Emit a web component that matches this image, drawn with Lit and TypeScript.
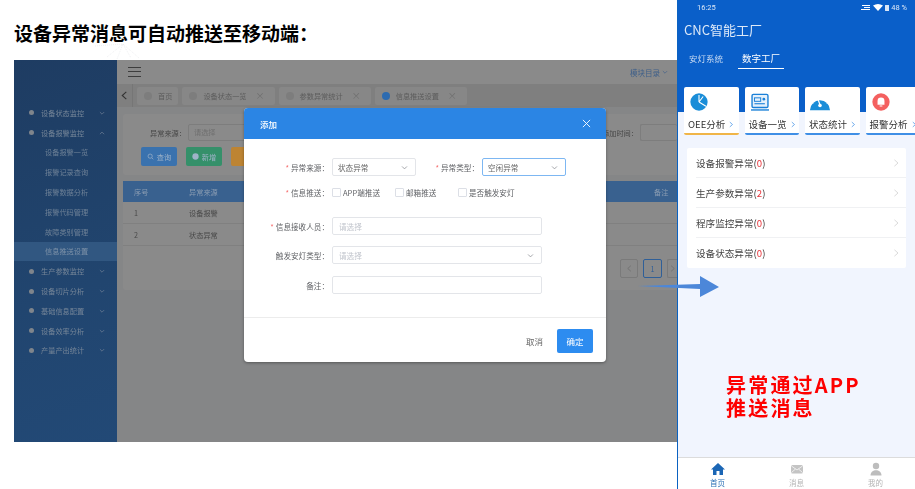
import { LitElement, html, css, svg } from "lit";
import { customElement } from "lit/decorators.js";

const chev = (cls: string, up = false) => html`<svg class=${cls} viewBox="0 0 10 10"><path d=${up ? "M1.5 7 5 3.5 8.5 7" : "M1.5 3.5 5 7 8.5 3.5"} fill="none" stroke="currentColor" stroke-width="1.1"/></svg>`;
const right = (cls: string) => html`<svg class=${cls} viewBox="0 0 10 10"><path d="M3 1 7.5 5 3 9" fill="none" stroke="currentColor" stroke-width="1.2"/></svg>`;

const cards = [
  { label: "OEE分析", color: "#f0b548", icon: svg`<circle cx="13" cy="13" r="12.5" fill="#1a8dd8"/><path d="M13 13V3M13 13l6-8M13 13l10 6" stroke="#fff" stroke-width="1.6" fill="none"/>` },
  { label: "设备一览", color: "#3f8fe6", icon: svg`<rect x="1.5" y="2" width="23" height="19" rx="2" fill="#e6f1fb" stroke="#1a80d8" stroke-width="2"/><rect x="5" y="7" width="9" height="5" fill="none" stroke="#1a80d8" stroke-width="1.4"/><circle cx="18.5" cy="9" r="2" fill="#1a80d8"/><path d="M5 15.5h15" stroke="#1a80d8" stroke-width="1.6"/><path d="M0 24.5h26" stroke="#1a80d8" stroke-width="2"/>` },
  { label: "状态统计", color: "#3f8fe6", icon: svg`<path d="M-1.5 25A14.5 14.5 0 1 1 27.500 25Z" fill="#1a8dd8"/><path d="M13 17 9.500 7.500" stroke="#fff" stroke-width="1.800"/><circle cx="13" cy="18" r="2.600" fill="#fff"/><path d="M1 15h2.500M22.500 15H25M5 6l1.500 1.500M21 6l-1.500 1.500M13 2v2.500" stroke="#fff" stroke-width="1.200"/>` },
  { label: "报警分析", color: "#3f8fe6", icon: svg`<circle cx="13" cy="13" r="12.500" fill="#f4605f"/><path d="M8 17v-5.500a5 5 0 0 1 10 0V17Z" fill="#fff"/><rect x="11" y="18" width="4" height="1.500" fill="#fff"/>` },
];
const listRows = [["设备报警异常", "0"], ["生产参数异常", "2"], ["程序监控异常", "0"], ["设备状态异常", "0"]];

@customElement("app-root")
export class AppRoot extends LitElement {
  static styles = css`
    :host { display: block; width: 915px; height: 489px; overflow: hidden; background: #fff; font-family: "Noto Sans CJK SC", "Liberation Sans", sans-serif; position: relative; }
    svg { display: block; flex: none; }
    .page { display: grid; grid-template-columns: 677px 238px; height: 489px; }
    .left { padding: 23px 0 0 14px; display: flex; flex-direction: column; }
    h1 { margin: 0; height: 37px; font-size: 19px; line-height: 20px; font-weight: 700; color: #000; white-space: nowrap; }
    .shot { position: relative; width: 663px; height: 382px; display: grid; grid-template-columns: 103px 1fr; background: #858687; overflow: hidden; filter: blur(0.35px); }

    .side { background: linear-gradient(160deg, #1e3c62 0%, #21456f 60%, #224976 100%); padding-top: 43px; font-size: 7.200px; color: #768698; }
    .m { height: 19.800px; display: flex; align-items: center; padding-left: 15px; gap: 7px; }
    .m i { width: 5px; height: 5px; border-radius: 50%; background: #7f858c; }
    .m span { flex: 1; }
    .m .c { width: 6px; height: 6px; margin-right: 12px; color: #77879b; }
    .s { height: 19.800px; display: flex; align-items: center; padding-left: 31px; color: #6d8096; }
    .s.on { background: #315781; color: #7d91a8; }

    .main { display: flex; flex-direction: column; min-width: 0; color: #5b5b5b; font-size: 7.200px; }
    .top { height: 24px; background: #8a8a8a; display: flex; align-items: center; justify-content: space-between; padding: 0 9px 0 11px; }
    .ham { width: 13px; height: 8px; border-top: 1px solid #3d3d3d; border-bottom: 1px solid #3d3d3d; position: relative; }
    .ham::after { content: ""; position: absolute; left: 0; right: 0; top: 3px; height: 1px; background: #3d3d3d; }
    .mod { display: flex; align-items: center; gap: 2px; color: #3e5f89; font-size: 7.500px; }
    .mod svg { width: 6px; height: 6px; }
    .tabs { height: 23px; background: #7f7f7f; display: flex; align-items: center; gap: 4px; padding-left: 3px; }
    .tabs .back { width: 13px; color: #333; height: 100%; display: flex; align-items: center; border-right: 1px solid #767676; box-sizing: border-box; margin-right: 0; }
    .tabs .back svg { width: 9px; height: 9px; transform: scaleX(-1); }
    .tab { height: 18px; background: #878787; border-radius: 2px; display: flex; align-items: center; padding: 0 10px 0 7px; gap: 6px; color: #5c5c5c; }
    .tab.short { padding-right: 6px; }
    .tab i { width: 8px; height: 8px; border-radius: 50%; background: #7d7d7d; }
    .tab i.on { background: #2d6bb0; }
    .tab b { font-weight: 400; color: #6e6e6e; margin-left: 3px; font-size: 9px; line-height: 1; }
    .content { padding: 7px 0 0 6px; display: flex; flex-direction: column; gap: 6px; }
    .filter { height: 61px; background: #8a8a8a; border-radius: 2px; padding: 10px 0 0 18px; box-sizing: border-box; }
    .f1 { display: flex; align-items: center; height: 17px; justify-content: space-between; color: #474747; padding-left: 9px; }
    .f1 div { display: flex; align-items: center; gap: 2px; }
    .f1 u { display: block; text-decoration: none; width: 100px; height: 17px; border: 1px solid #7d7d7d; box-sizing: border-box; border-radius: 2px; padding: 2px 5px; color: #6f6f6f; }
    .f1 u.r { width: 37px; border-right: 0; }
    .btns { display: flex; gap: 9px; margin-top: 6px; }
    .btn { height: 19px; width: 36px; border-radius: 2px; display: flex; align-items: center; justify-content: center; gap: 3px; color: #9fb3c8; }
    .btn svg { width: 7px; height: 7px; }
    .blue { background: #3a72ae; }
    .green { background: #35906a; }
    .orange { background: #bd8433; }
    .tbl { height: 109px; background: #8a8a8a; border-radius: 2px; position: relative; }
    .tr { height: 22px; display: grid; grid-template-columns: 55px 1fr 23px; align-items: center; padding-left: 11px; border-bottom: 1px solid #808080; box-sizing: border-box; color: #484848; }
    .tr.h { height: 21px; background: #39618f; color: #8a9cb2; border-bottom: 0; }
    .pager { position: absolute; right: 0; bottom: 12px; display: flex; align-items: center; gap: 5px; color: #4b4b4b; }
    .pager span { margin-right: 9px; }
    .pager em { width: 18px; height: 19px; box-sizing: border-box; border: 1px solid #7a7a7a; border-radius: 2px; display: flex; align-items: center; justify-content: center; font-style: normal; color: #707070; }
    .pager em svg { width: 7px; height: 7px; }
    .pager em.on { border-color: #2f5f98; color: #2f5f98; width: 19px; }
    .pager em.cut { width: 10px; border-right: 0; border-radius: 2px 0 0 2px; }
    .flip { transform: scaleX(-1); }

    .modal { position: absolute; left: 230px; top: 48px; width: 362px; height: 254px; background: #fff; border-radius: 4px; box-shadow: 0 1px 3px rgba(0,0,0,.35); display: flex; flex-direction: column; overflow: hidden; }
    .mh { height: 31px; background: #2b85e4; color: #fff; display: flex; align-items: center; justify-content: space-between; padding: 0 15px 0 16px; font-size: 8.500px; font-weight: 500; flex: none; }
    .mh svg { width: 9px; height: 9px; }
    .mb { flex: 1; padding-top: 19px; color: #606266; font-size: 7.600px; }
    .row { display: flex; align-items: center; height: 18px; }
    .mt7 { margin-top: 7px; }
    .mt16 { margin-top: 16px; }
    .mt11 { margin-top: 11px; }
    .mt12 { margin-top: 12px; }
    .lab { width: 88px; text-align: right; padding-right: 3px; box-sizing: border-box; white-space: nowrap; }
    .lab.two { width: 66px; }
    .star { color: #f56c6c; margin-right: 2px; }
    .inp { height: 18px; box-sizing: border-box; border: 1px solid #e3e5e9; border-radius: 2px; display: flex; align-items: center; justify-content: space-between; padding: 0 7px 0 5px; color: #666; background: #fff; }
    .inp.w1 { width: 84px; }
    .inp.w2 { width: 210px; padding-left: 6px; }
    .inp.focus { border-color: #7db7f2; }
    .inp .ph { color: #c0c4cc; }
    .inp svg { width: 7px; height: 7px; color: #8a8d92; }
    .checks { display: flex; }
    .ck { display: flex; align-items: center; gap: 2px; white-space: nowrap; width: 63px; }
    .ck i { width: 9px; height: 9px; box-sizing: border-box; border: 1px solid #dcdfe6; border-radius: 1px; }
    .mf { height: 45px; box-sizing: border-box; border-top: 1px solid #ececec; flex: none; display: flex; align-items: center; justify-content: flex-end; padding: 1px 13px 0 0; gap: 14px; font-size: 8.500px; color: #666; }
    .ok { width: 36px; height: 24px; border-radius: 2px; background: #2d8cf0; color: #fff; display: flex; align-items: center; justify-content: center; }

    .deco { position: absolute; left: 93px; top: 43px; width: 52px; height: 17px; }
    .arrow { position: absolute; left: 638px; top: 276px; width: 82px; height: 22px; }

    .phone { border-left: 1px solid #0a62c2; background: #f1f5fe; display: flex; flex-direction: column; box-sizing: border-box; height: 489px; filter: blur(0.25px); }
    .hero { background: #0a5fc9; height: 112px; flex: none; color: #fff; padding-left: 6px; box-sizing: border-box; }
    .status { height: 15px; display: flex; align-items: center; justify-content: space-between; font-size: 7.500px; color: #dbe7f7; padding: 0 8px 0 13px; font-family: "Roboto", sans-serif; }
    .status div { display: flex; align-items: center; gap: 2px; }
    .status svg { height: 7px; width: auto; }
    .ttl { font-size: 13px; line-height: 20px; margin-top: 5px; color: #dde9f8; font-weight: 400; }
    .ptabs { display: flex; margin-top: 12px; padding-left: 5px; font-size: 8.500px; gap: 19px; }
    .ptabs span { color: #c4d8f2; height: 17px; line-height: 12px; }
    .ptabs span.on { color: #fff; font-size: 9.500px; border-bottom: 1px solid #fff; padding: 0 4px; height: 16px; margin-left: -4px; }
    .cards { display: flex; gap: 6px; padding-left: 6px; margin-top: -25px; flex: none; height: 48px; overflow: hidden; }
    .card { width: 54.500px; flex: none; height: 48px; box-sizing: border-box; background: #fff; border-radius: 2px; border-bottom: 2px solid; display: flex; flex-direction: column; padding: 6px 0 0 4px; }
    .card svg.ic { width: 18px; height: 18px; margin-left: 2px; overflow: visible; }
    .card p { margin: auto 0 2px; display: flex; align-items: center; gap: 3px; font-size: 9.500px; line-height: 14px; color: #333; white-space: nowrap; }
    .card p svg { width: 6px; height: 7px; color: #3f8fe6; }
    .list { margin: 13px 9px 0 9px; background: #fff; border-radius: 2px; flex: none; padding-left: 9px; }
    .li { height: 30px; box-sizing: border-box; display: flex; align-items: center; justify-content: space-between; padding-right: 6px; border-bottom: 1px solid #f0f1f3; font-size: 9.600px; color: #444; }
    .li:last-child { border-bottom: 0; }
    .li em { font-style: normal; color: #e8333a; }
    .li svg { width: 8px; height: 10px; color: #d8d8d8; }
    .msg { margin: 105px 0 0 48px; font-size: 20px; line-height: 23px; font-weight: 700; letter-spacing: 2.200px; color: #fe0000; flex: none; white-space: nowrap; }
    .nav { margin-top: auto; height: 32px; box-sizing: border-box; background: #fff; border-top: 1px solid #dcdcdc; display: grid; grid-template-columns: repeat(3, 1fr); flex: none; }
    .nav div { display: flex; flex-direction: column; align-items: center; font-size: 7.500px; color: #b4b4b4; padding-top: 4px; gap: 2px; line-height: 10px; }
    .nav div.on { color: #2a6fb5; }
    .nav svg { width: 14px; height: 14px; }
  `;

  menu(t: string, up = false) {
    return html`<div class="m"><i></i><span>${t}</span>${chev("c", up)}</div>`;
  }
  tab(t: string, on = false, close = true) {
    return html`<div class="tab ${close ? "" : "short"}"><i class=${on ? "on" : ""}></i><span>${t}</span>${close ? html`<b>×</b>` : ""}</div>`;
  }

  render() {
    return html`<div class="page">
      <section class="left">
        <h1>设备异常消息可自动推送至移动端：</h1>
        <div class="shot">
          <aside class="side">
            ${this.menu("设备状态监控")}
            ${this.menu("设备报警监控", true)}
            ${["设备报警一览", "报警记录查询", "报警数据分析", "报警代码管理", "故障类别管理"].map((s) => html`<div class="s">${s}</div>`)}
            <div class="s on">信息推送设置</div>
            ${["生产参数监控", "设备切片分析", "基础信息配置", "设备效率分析", "产量产出统计"].map((s) => this.menu(s))}
          </aside>
          <div class="main">
            <div class="top"><div class="ham"></div><div class="mod">模块目录${chev("")}</div></div>
            <div class="tabs">
              <div class="back">${right("")}</div>
              ${this.tab("首页", false, false)}${this.tab("设备状态一览")}${this.tab("参数异常统计")}${this.tab("信息推送设置", true)}
            </div>
            <div class="content">
              <div class="filter">
                <div class="f1"><div>异常来源：<u>请选择</u></div><div>添加时间：<u class="r"></u></div></div>
                <div class="btns">
                  <div class="btn blue"><svg viewBox="0 0 10 10"><circle cx="4.500" cy="4.500" r="3" fill="none" stroke="currentColor"/><path d="m7 7 2 2" stroke="currentColor"/></svg>查询</div>
                  <div class="btn green"><svg viewBox="0 0 10 10"><circle cx="5" cy="5" r="4.500" fill="currentColor"/></svg>新增</div>
                  <div class="btn orange"><svg viewBox="0 0 10 10"><path d="m2 8 5-5" stroke="currentColor" stroke-width="1.500"/></svg></div>
                </div>
              </div>
              <div class="tbl">
                <div class="tr h"><span>序号</span><span>异常来源</span><span>备注</span></div>
                <div class="tr"><span>1</span><span>设备报警</span><span></span></div>
                <div class="tr"><span>2</span><span>状态异常</span><span></span></div>
                <div class="pager"><span>条</span><em>${right("flip")}</em><em class="on">1</em><em class="cut">${right("")}</em></div>
              </div>
            </div>
          </div>
          <div class="modal">
            <div class="mh"><span>添加</span><svg viewBox="0 0 10 10"><path d="m1 1 8 8M9 1 1 9" stroke="#fff" stroke-width="1"/></svg></div>
            <div class="mb">
              <div class="row">
                <div class="lab"><span class="star">*</span>异常来源：</div>
                <div class="inp w1"><span>状态异常</span>${chev("")}</div>
                <div class="lab two"><span class="star">*</span>异常类型：</div>
                <div class="inp w1 focus"><span>空闲异常</span>${chev("")}</div>
              </div>
              <div class="row mt7">
                <div class="lab"><span class="star">*</span>信息推送：</div>
                <div class="checks">
                  <div class="ck"><i></i>APP端推送</div>
                  <div class="ck"><i></i>邮箱推送</div>
                  <div class="ck"><i></i>是否触发安灯</div>
                </div>
              </div>
              <div class="row mt16">
                <div class="lab"><span class="star">*</span>信息接收人员：</div>
                <div class="inp w2"><span class="ph">请选择</span></div>
              </div>
              <div class="row mt11">
                <div class="lab">触发安灯类型：</div>
                <div class="inp w2"><span class="ph">请选择</span>${chev("")}</div>
              </div>
              <div class="row mt12">
                <div class="lab">备注：</div>
                <div class="inp w2"></div>
              </div>
            </div>
            <div class="mf"><span>取消</span><div class="ok">确定</div></div>
          </div>
        </div>
      </section>
      <section class="phone">
        <div class="hero">
          <div class="status"><span>16:25</span><div>
            <svg viewBox="0 0 10 7"><path d="M1 1.500h8M3 3.500h6M0 5.500h9" stroke="#fff"/></svg>
            <svg viewBox="0 0 10 7"><path d="M0 1.500Q5-1.500 10 1.500L5 7Z" fill="#fff"/></svg>
            <svg viewBox="0 0 5 8"><rect x="0" y="1" width="5" height="7" rx=".5" fill="#dbe7f7"/></svg>
            <span>48 %</span></div></div>
          <div class="ttl">CNC智能工厂</div>
          <div class="ptabs"><span>安灯系统</span><span class="on">数字工厂</span></div>
        </div>
        <div class="cards">
          ${cards.map((c) => html`<div class="card" style="border-bottom-color:${c.color}">
            <svg class="ic" viewBox="0 0 26 26">${c.icon}</svg>
            <p>${c.label}${right("")}</p></div>`)}
        </div>
        <div class="list">
          ${listRows.map(([t, n]) => html`<div class="li"><span>${t}(<em>${n}</em>)</span>${right("")}</div>`)}
        </div>
        <div class="msg">异常通过APP<br />推送消息</div>
        <div class="nav">
          <div class="on"><svg viewBox="0 0 14 14"><path d="M7 1 0 7.500h2V13h3.500V9h3v4H12V7.500h2Z" fill="#1b66b5"/></svg>首页</div>
          <div><svg viewBox="0 0 14 14"><rect x="1" y="3" width="12" height="8.500" rx="1.500" fill="#c4c4c4"/><path d="m1.500 4 5.500 4 5.500-4M1.500 10.500l4-3.500M12.500 10.500l-4-3.500" stroke="#fff" stroke-width=".7" fill="none"/></svg>消息</div>
          <div><svg viewBox="0 0 14 14"><circle cx="7" cy="4" r="3.200" fill="#bdbdbd"/><path d="M1.500 13.500c0-7 11-7 11 0Z" fill="#bdbdbd"/></svg>我的</div>
        </div>
      </section>
      <svg class="deco" viewBox="0 0 52 17"><path d="M2 3 30 1 38 15M14 14 30 1 24 16M30 1 46 15" stroke="#e4e6e9" stroke-width=".6" fill="none" stroke-dasharray="1 1"/></svg>
      <svg class="arrow" viewBox="0 0 82 22"><path d="M0 10 62 8V0L81 11 62 21V13Z" fill="#4c87d9"/></svg>
    </div>`;
  }
}
